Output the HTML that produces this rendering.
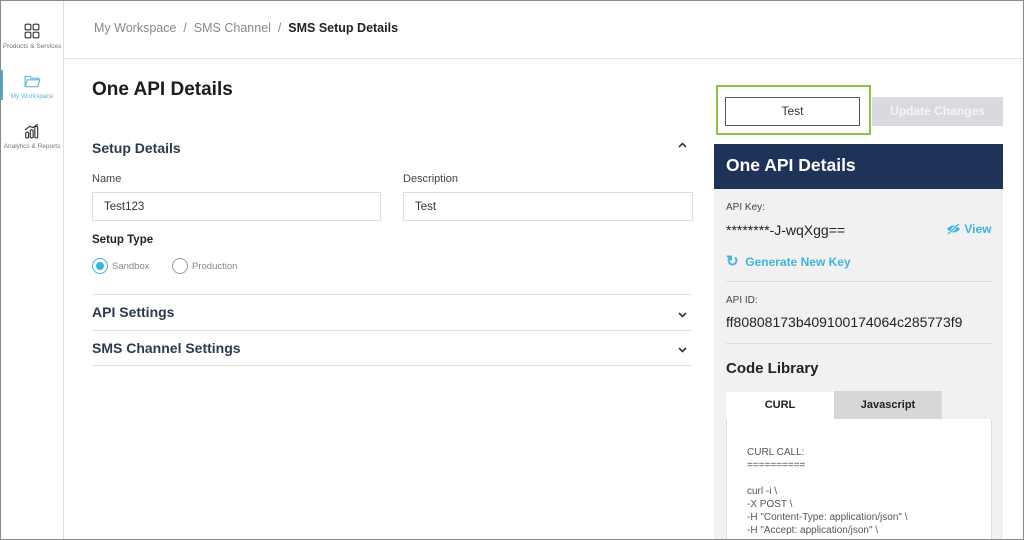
<!DOCTYPE html>
<html><head><style>
*{box-sizing:border-box;margin:0;padding:0}
body{width:1024px;height:540px;overflow:hidden;background:#fff;font-family:"Liberation Sans",sans-serif;position:relative;color:#222}
.frame{position:absolute;left:0;top:0;width:1024px;height:540px;border:1px solid #8a8a8a;pointer-events:none;z-index:9}
.side{position:absolute;left:0;top:0;width:64px;height:540px;border-right:1px solid #ddd;background:#fff}
.si{position:absolute;left:0;width:64px;text-align:center;font-size:6.5px;color:#777}
.si svg{display:block;margin:0 auto 4px}
.hdr{position:absolute;left:64px;top:0;right:0;height:59px;border-bottom:1px solid #e3e3e3}
.bc{position:absolute;left:94px;top:21px;font-size:12.5px;color:#888}
.bc b{color:#222}
.abs{position:absolute}
h1{position:absolute;left:92px;top:79px;font-size:19px;font-weight:bold;color:#1c1c1c}
.sec{font-weight:bold;color:#2d3a4e;font-size:14px}
.lbl{font-size:11px;color:#444}
.inp{position:absolute;height:29px;border:1px solid #ddd;font-size:11.5px;padding:8px 11px;color:#333}
.line{position:absolute;height:1px;background:#e2e2e2}
.chev{position:absolute}
.panel{position:absolute;left:714px;top:144px;width:289px;height:396px;background:#f1f1f1;overflow:hidden}
.ph{position:absolute;left:0;top:0;width:289px;height:45px;background:#1f3258;color:#fff;font-size:17.5px;font-weight:bold;padding:11px 12px}
.blue{color:#3fb3dd}
</style></head><body>
<div class="side">
 <div style="position:absolute;left:0;top:70px;width:3px;height:30px;background:#3fb3dd"></div>
 <div class="si" style="top:23px"><svg width="16" height="16" viewBox="0 0 14 14" fill="none" stroke="#333" stroke-width="1"><rect x="1" y="1" width="5" height="5" rx="1.2"/><rect x="8" y="1" width="5" height="5" rx="1.2"/><rect x="1" y="8" width="5" height="5" rx="1.2"/><rect x="8" y="8" width="5" height="5" rx="1.2"/></svg>Products &amp; Services</div>
 <div class="si" style="top:73px;color:#5ab8d8"><svg width="17" height="16" viewBox="0 0 15 14" fill="none" stroke="#5ab8d8" stroke-width="1"><path d="M1 12V3h4l1.5 1.5H13v2"/><path d="M1 12l2-6h11l-2 6z"/></svg>My Workspace</div>
 <div class="si" style="top:123px"><svg width="16" height="16" viewBox="0 0 14 14" fill="none" stroke="#333" stroke-width="1"><rect x="1.5" y="8" width="2.5" height="5" rx="1"/><rect x="5.5" y="6" width="2.5" height="7" rx="1"/><rect x="9.5" y="3" width="2.5" height="10" rx="1"/><path d="M1 6l4-3 3 1 4-3"/></svg>Analytics &amp; Reports</div>
</div>
<div class="hdr"></div>
<div class="bc">My Workspace &nbsp;/&nbsp; SMS Channel &nbsp;/&nbsp; <b>SMS Setup Details</b></div>
<h1>One API Details</h1>
<div class="abs sec" style="left:92px;top:140px">Setup Details</div>
<svg class="chev" style="left:678px;top:142px" width="9" height="6" viewBox="0 0 9 6"><path d="M1 5l3.5-3.5L8 5" fill="none" stroke="#333" stroke-width="1.6"/></svg>
<div class="abs lbl" style="left:92px;top:173px">Name</div>
<div class="abs lbl" style="left:403px;top:173px">Description</div>
<div class="inp" style="left:92px;top:192px;width:289px">Test123</div>
<div class="inp" style="left:403px;top:192px;width:290px">Test</div>
<div class="abs" style="left:92px;top:234px;font-size:11.5px;font-weight:bold;color:#222">Setup Type</div>
<div class="abs" style="left:92px;top:258px;width:16px;height:16px;border:1px solid #3fb3dd;border-radius:50%"><div style="margin:3px;width:8px;height:8px;border-radius:50%;background:#3fb3dd"></div></div>
<div class="abs" style="left:112px;top:261px;font-size:9.5px;color:#888">Sandbox</div>
<div class="abs" style="left:172px;top:258px;width:16px;height:16px;border:1px solid #999;border-radius:50%"></div>
<div class="abs" style="left:192px;top:261px;font-size:9.5px;color:#888">Production</div>
<div class="line" style="left:92px;top:294px;width:600px"></div>
<div class="abs sec" style="left:92px;top:304px">API Settings</div>
<svg class="chev" style="left:678px;top:312px" width="9" height="6" viewBox="0 0 9 6"><path d="M1 1l3.5 3.5L8 1" fill="none" stroke="#333" stroke-width="1.6"/></svg>
<div class="line" style="left:92px;top:330px;width:600px"></div>
<div class="abs sec" style="left:92px;top:340px">SMS Channel Settings</div>
<svg class="chev" style="left:678px;top:347px" width="9" height="6" viewBox="0 0 9 6"><path d="M1 1l3.5 3.5L8 1" fill="none" stroke="#333" stroke-width="1.6"/></svg>
<div class="line" style="left:92px;top:365px;width:600px"></div>

<div class="abs" style="left:716px;top:85px;width:155px;height:50px;border:2px solid #8cc04a"></div>
<div class="abs" style="left:725px;top:97px;width:135px;height:29px;border:1px solid #555;font-size:12px;text-align:center;line-height:27px;color:#333">Test</div>
<div class="abs" style="left:872px;top:97px;width:131px;height:29px;background:#d8dadd;color:#f4f4f4;font-size:12px;text-align:center;line-height:29px;font-weight:bold">Update Changes</div>

<div class="panel">
 <div class="ph">One API Details</div>
 <div class="abs" style="left:12px;top:58px;font-size:10px;color:#444">API Key:</div>
 <div class="abs" style="left:12px;top:78px;font-size:14px;color:#222">********-J-wqXgg==</div>
 <div class="abs blue" style="left:232px;top:78px;font-size:12px;font-weight:bold"><svg width="15" height="12" viewBox="0 0 15 12" style="vertical-align:-2px"><path d="M1 6q6.5-7 13 0q-6.5 7-13 0z" fill="#3fb3dd"/><circle cx="7.5" cy="6" r="2" fill="#f1f1f1"/><path d="M2 11L13 1" stroke="#f1f1f1" stroke-width="2.4"/><path d="M2 11L13 1" stroke="#3fb3dd" stroke-width="1.2"/></svg> View</div>
 <div class="abs blue" style="left:12px;top:108px;font-size:12px;font-weight:bold"><span style="font-size:15px">&#8635;</span>&nbsp; Generate New Key</div>
 <div class="line" style="left:12px;top:137px;width:266px;background:#ddd"></div>
 <div class="abs" style="left:12px;top:151px;font-size:10px;color:#444">API ID:</div>
 <div class="abs" style="left:12px;top:170px;font-size:14px;color:#222">ff80808173b409100174064c285773f9</div>
 <div class="line" style="left:12px;top:199px;width:266px;background:#ddd"></div>
 <div class="abs" style="left:12px;top:216px;font-size:15px;font-weight:bold;color:#222">Code Library</div>
 <div class="abs" style="left:12px;top:248px;width:108px;height:27px;background:#fff;font-size:11px;font-weight:bold;text-align:center;line-height:27px">CURL</div>
 <div class="abs" style="left:120px;top:247px;width:108px;height:28px;background:#d7d7d7;font-size:11px;font-weight:bold;text-align:center;line-height:28px">Javascript</div>
 <div class="abs" style="left:12px;top:275px;width:266px;height:130px;background:#fff;border:1px solid #ddd;border-top:none"></div>
 <div class="abs" style="left:33px;top:302px;font-size:10px;line-height:13px;color:#555">CURL CALL:<br>==========<br><br>curl -i \<br>-X POST \<br>-H "Content-Type: application/json" \<br>-H "Accept: application/json" \</div>
</div>
<div class="frame"></div>
</body></html>
